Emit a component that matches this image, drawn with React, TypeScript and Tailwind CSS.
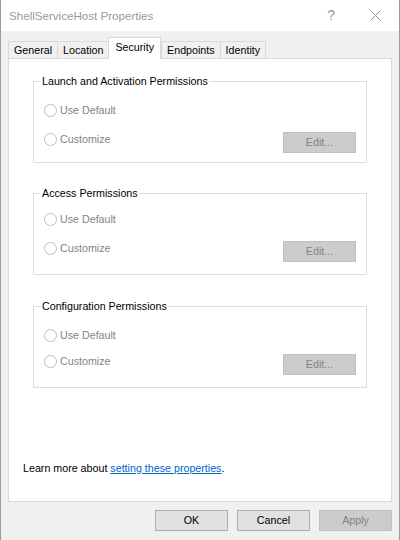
import React from 'react';

const font = { fontFamily: '"Liberation Sans", Arial, sans-serif' };

function Radio({ label }: { label: string }) {
  return (
    <div className="flex items-center h-[14px] gap-[3px]">
      <span className="w-[13px] h-[13px] rounded-full border border-[#bcbcbc] bg-white shrink-0" />
      <span className="text-[10.7px] leading-[14px] text-[#838383]">{label}</span>
    </div>
  );
}

function GroupBox({ title, top, pt, gap }: { title: string; top: string; pt: string; gap: string }) {
  return (
    <fieldset className={`mx-[24px] ${top} h-[89px] border border-[#dcdcdc]`}>
      <legend className="ml-[7px] px-[1px] text-[10.7px] leading-[14px] text-black">{title}</legend>
      <div className={`${pt} px-[10px] flex flex-col ${gap}`}>
        <Radio label="Use Default" />
        <div className="flex items-start justify-between">
          <Radio label="Customize" />
          <button className="w-[73px] h-[21px] bg-[#cccccc] border border-[#bfbfbf] text-[10.7px] text-[#838383]">
            Edit...
          </button>
        </div>
      </div>
    </fieldset>
  );
}

const tabs = ['General', 'Location', 'Security', 'Endpoints', 'Identity'];

export default function App() {
  return (
    <div className="w-[400px] h-[540px] bg-[#f0f0f0] border-x border-[#9a9a9a] flex flex-col" style={font}>
      {/* Title bar */}
      <div className="h-[31px] bg-white flex items-center pl-[8px] pr-[18px] shrink-0">
        <span className="text-[11.6px] text-[#999999] flex-1" style={{ fontFamily: '"Segoe UI", "Liberation Sans", sans-serif' }}>
          ShellServiceHost Properties
        </span>
        <span className="text-[14px] text-[#999999] mr-[35px]">?</span>
        <svg width="11" height="11" viewBox="0 0 11 11">
          <path d="M0.5 0.5 L10.5 10.5 M10.5 0.5 L0.5 10.5" stroke="#8f8f8f" strokeWidth="1" />
        </svg>
      </div>

      {/* Tabs */}
      <div className="h-[27px] flex items-end px-[7px] shrink-0 relative z-10">
        {tabs.map((t) =>
          t === 'Security' ? (
            <div
              key={t}
              className="h-[22px] -mb-[1px] px-[6px] bg-white border border-b-0 border-[#d9d9d9] text-[10.7px] leading-[18px] text-black"
            >
              {t}
            </div>
          ) : (
            <div
              key={t}
              className="h-[17px] px-[5px] bg-[#f0f0f0] border border-b-0 border-r-0 last:border-r border-[#d9d9d9] text-[10.7px] leading-[16px] text-black"
            >
              {t}
            </div>
          )
        )}
      </div>

      {/* Panel */}
      <div className="mx-[7px] h-[444px] bg-white border border-[#d9d9d9] flex flex-col shrink-0">
        <GroupBox title="Launch and Activation Permissions" top="mt-[15px]" pt="pt-[15px]" gap="gap-[15px]" />
        <GroupBox title="Access Permissions" top="mt-[23px]" pt="pt-[12px]" gap="gap-[15px]" />
        <GroupBox title="Configuration Permissions" top="mt-[24px]" pt="pt-[15px]" gap="gap-[12px]" />
        <div className="mt-auto mb-[25px] ml-[14px] text-[10.7px] text-black">
          Learn more about{' '}
          <a className="text-[#0066cc] underline">setting these properties</a>.
        </div>
      </div>

      {/* Buttons */}
      <div className="flex justify-end gap-[9px] pr-[7px] mt-[8px]">
        <button className="w-[73px] h-[21px] bg-[#e1e1e1] border border-[#adadad] text-[10.7px] text-black">OK</button>
        <button className="w-[73px] h-[21px] bg-[#e1e1e1] border border-[#adadad] text-[10.7px] text-black">Cancel</button>
        <button className="w-[73px] h-[21px] bg-[#cccccc] border border-[#bfbfbf] text-[10.7px] text-[#838383]">Apply</button>
      </div>
    </div>
  );
}
